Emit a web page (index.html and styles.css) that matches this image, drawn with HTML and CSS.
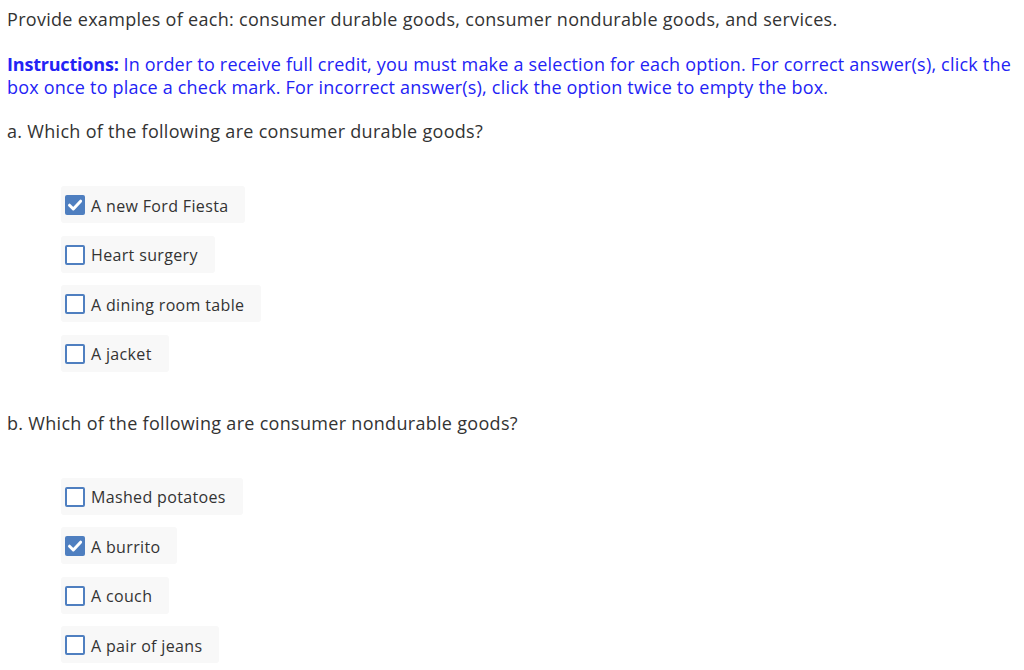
FILE: index.html
```html
<!DOCTYPE html>
<html>
<head>
<meta charset="utf-8">
<link rel="stylesheet" href="styles.css">
</head>
<body>
<div class="page">
  <p class="prompt">Provide examples of each: consumer durable goods, consumer nondurable goods, and services.</p>
  <p class="instructions"><strong>Instructions:</strong> In order to receive full credit, you must make a selection for each option. For correct answer(s), click the box once to place a check mark. For incorrect answer(s), click the option twice to empty the box.</p>

  <p class="question">a. Which of the following are consumer durable goods?</p>
  <ul class="options">
    <li class="option"><span class="box checked"><svg viewBox="0 0 20 20" width="20" height="20"><path d="M4.5 10.2 L8.3 14 L15.6 6.2" fill="none" stroke="#fff" stroke-width="3" stroke-linecap="round" stroke-linejoin="round"/></svg></span><span class="label">A new Ford Fiesta</span></li>
    <li class="option"><span class="box"></span><span class="label">Heart surgery</span></li>
    <li class="option"><span class="box"></span><span class="label">A dining room table</span></li>
    <li class="option"><span class="box"></span><span class="label">A jacket</span></li>
  </ul>

  <p class="question q2">b. Which of the following are consumer nondurable goods?</p>
  <ul class="options">
    <li class="option"><span class="box"></span><span class="label">Mashed potatoes</span></li>
    <li class="option"><span class="box checked"><svg viewBox="0 0 20 20" width="20" height="20"><path d="M4.5 10.2 L8.3 14 L15.6 6.2" fill="none" stroke="#fff" stroke-width="3" stroke-linecap="round" stroke-linejoin="round"/></svg></span><span class="label">A burrito</span></li>
    <li class="option"><span class="box"></span><span class="label">A couch</span></li>
    <li class="option"><span class="box"></span><span class="label">A pair of jeans</span></li>
  </ul>
</div>
</body>
</html>
```

FILE: styles.css
```css
html, body {
  margin: 0;
  padding: 0;
  background: #fff;
}

.page {
  padding: 8px 4px 0 7px;
  font-family: "Open Sans", "Liberation Sans", sans-serif;
  font-size: 18px;
  letter-spacing: 0.3px;
  line-height: 23px;
  color: #333;
}

p {
  margin: 0;
}

.instructions {
  margin-top: 22px;
  color: #2323f5;
  letter-spacing: 0.2px;
}

.instructions strong {
  font-weight: 700;
  letter-spacing: -0.2px;
}

.question {
  margin-top: 21px;
}

.question.q2 {
  margin-top: 40px;
}

.options {
  list-style: none;
  margin: 43px 0 0 54px;
  padding: 0;
  display: flex;
  flex-direction: column;
  align-items: flex-start;
  gap: 12.5px;
}

.option {
  display: flex;
  align-items: center;
  height: 37px;
  padding: 0 17px 0 4px;
  background: #f8f8f8;
  border-radius: 3px;
}

.box {
  box-sizing: border-box;
  width: 20px;
  height: 20px;
  border: 2px solid #4f7fc0;
  border-radius: 2px;
  background: #fff;
  display: flex;
  align-items: center;
  justify-content: center;
  margin-right: 6px;
  margin-top: 1px;
}

.box.checked {
  background: #4f7fc0;
  border: none;
}

.label {
  font-size: 16px;
  letter-spacing: 0.35px;
  color: #333;
  padding-top: 3px;
}
```
